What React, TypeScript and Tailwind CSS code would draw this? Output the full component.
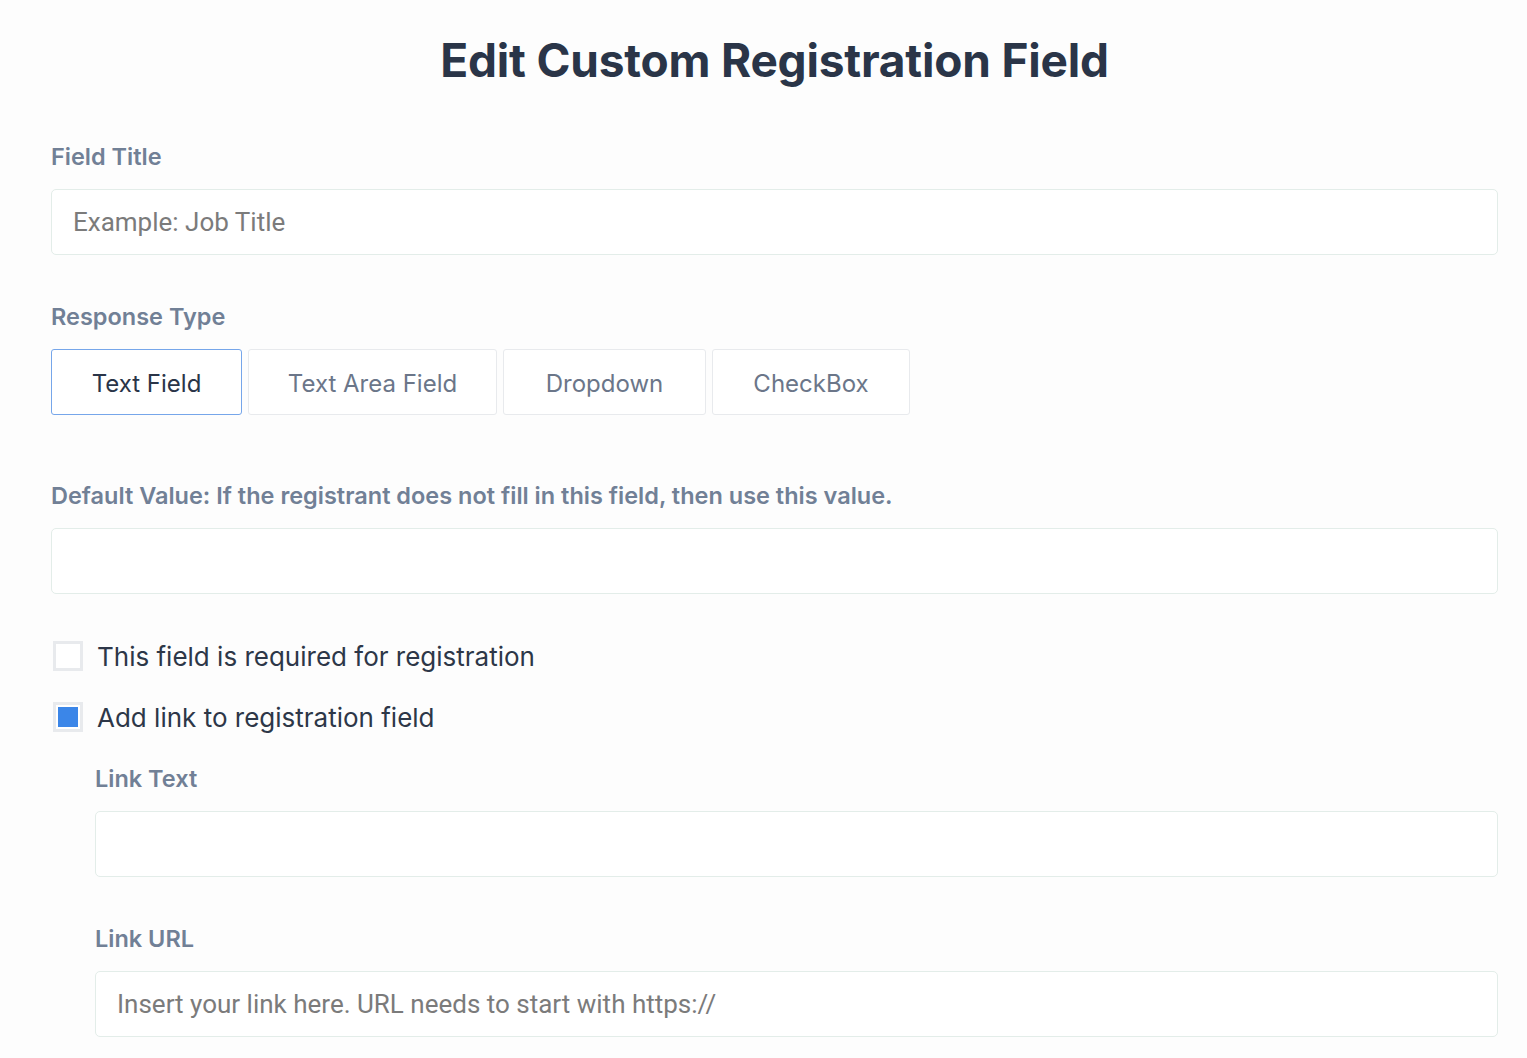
import { useState } from 'react';

const types = [
  { id: 'text', label: 'Text Field', w: 'w-[191px]' },
  { id: 'textarea', label: 'Text Area Field', w: 'w-[249px]' },
  { id: 'dropdown', label: 'Dropdown', w: 'w-[203px]' },
  { id: 'checkbox', label: 'CheckBox', w: 'w-[198px]' },
];

function Label({ children }: { children: React.ReactNode }) {
  return (
    <label className="block text-[23.5px] font-semibold text-[#718096] leading-[36px] mb-[14px]">{children}</label>
  );
}

function TextInput({ placeholder }: { placeholder?: string }) {
  return (
    <input
      type="text"
      placeholder={placeholder}
      className="w-full h-[66px] px-[21px] bg-white border border-[#e3ede9] rounded-[5px] text-[26px] text-[#2d3748] placeholder:text-[#7b7b7b] font-['Roboto',sans-serif] outline-none"
    />
  );
}

function Checkbox({ checked, onChange, label }: { checked: boolean; onChange: () => void; label: string }) {
  return (
    <button onClick={onChange} className="flex items-center gap-[14px] h-[30px]">
      <span className="w-[30px] h-[30px] border-[3px] border-[#e8eaed] bg-white flex items-center justify-center">
        {checked && <span className="w-[20px] h-[20px] bg-[#3b86e8]" />}
      </span>
      <span className="text-[26px] text-[#2d3748]">{label}</span>
    </button>
  );
}

export default function App() {
  const [selected, setSelected] = useState('text');
  const [required, setRequired] = useState(false);
  const [addLink, setAddLink] = useState(true);

  return (
    <div className="min-h-screen bg-[#fdfdfd] font-['Inter',sans-serif] px-[51px] pr-[29px] pt-[30px]">
      <h1 className="text-center text-[46px] font-bold text-[#2a3548] leading-[60px] tracking-[-0.2px]">
        Edit Custom Registration Field
      </h1>

      {/* Field Title */}
      <div className="mt-[49px]">
        <Label>Field Title</Label>
        <TextInput placeholder="Example: Job Title" />
      </div>

      {/* Response Type */}
      <div className="mt-[44px]">
        <Label>Response Type</Label>
        <div className="flex gap-[6px]">
          {types.map((t) => (
            <button
              key={t.id}
              onClick={() => setSelected(t.id)}
              className={`${t.w} h-[66px] pt-[3px] bg-white rounded-[3px] border text-[24px] ${
                selected === t.id ? 'border-[#76a6ea] text-[#2a3548]' : 'border-[#e8eaed] text-[#6b7689]'
              }`}
            >
              {t.label}
            </button>
          ))}
        </div>
      </div>

      {/* Default Value */}
      <div className="mt-[63px]">
        <Label>Default Value: If the registrant does not fill in this field, then use this value.</Label>
        <TextInput />
      </div>

      {/* Options */}
      <div className="mt-[47px] flex flex-col gap-[31px] pl-[2px]">
        <Checkbox checked={required} onChange={() => setRequired(!required)} label="This field is required for registration" />
        <Checkbox checked={addLink} onChange={() => setAddLink(!addLink)} label="Add link to registration field" />
      </div>

      {addLink && (
        <div className="pl-[44px]">
          <div className="mt-[29px]">
            <Label>Link Text</Label>
            <TextInput />
          </div>
          <div className="mt-[44px]">
            <Label>Link URL</Label>
            <TextInput placeholder="Insert your link here. URL needs to start with https://" />
          </div>
        </div>
      )}
    </div>
  );
}
